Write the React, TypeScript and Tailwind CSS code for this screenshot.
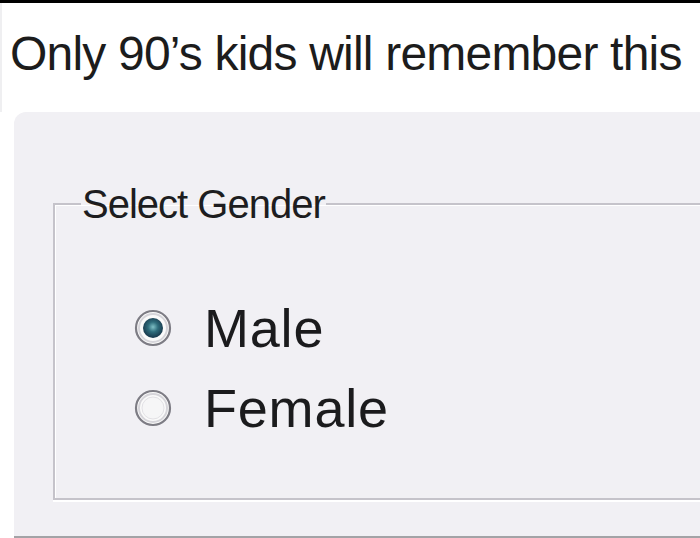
import React from "react";

function Radio({ checked }: { checked: boolean }) {
  return (
    <svg width="38" height="38" viewBox="0 0 38 38" className="shrink-0">
      <defs>
        <radialGradient id="dot" cx="50%" cy="45%" r="55%">
          <stop offset="0%" stopColor="#7fc0c6" />
          <stop offset="45%" stopColor="#2f6d7c" />
          <stop offset="100%" stopColor="#17364a" />
        </radialGradient>
      </defs>
      <circle cx="19" cy="19" r="17" fill="#fafafa" stroke="#7d7c84" strokeWidth="2.2" />
      <circle cx="19" cy="19" r="14" fill="none" stroke="#d6d5da" strokeWidth="2" />
      {checked ? (
        <circle cx="19" cy="19" r="10" fill="url(#dot)" />
      ) : (
        <circle cx="19" cy="19" r="11" fill="#f6f6f7" stroke="#e2e1e5" strokeWidth="1" />
      )}
    </svg>
  );
}

export default function App() {
  const font = { fontFamily: '"Liberation Sans", Arial, sans-serif' };

  return (
    <main
      className="w-[700px] h-[538px] bg-white flex flex-col overflow-hidden text-[#1b1b1d]"
      style={font}
    >
      <div className="h-[3px] bg-black shrink-0" />
      <header className="h-[109px] shrink-0 pl-[8px] pt-[27px] border-l-[2px] border-[#efeff1]">
        <h1 className="text-[48px] leading-none tracking-[-0.8px] text-[#1c1c1c]">
          Only 90’s kids will remember this
        </h1>
      </header>
      <div className="flex-1 flex flex-col ml-[14px] rounded-tl-[12px] bg-[#f1f0f4] border-b-[2px] border-[#a3a3a6]">
        <div className="flex-1 pl-[39px] pt-[72px] pb-[36px]">
          <fieldset className="h-full border-[#c5c3ca] border-l-[2px] border-t-[2px] border-b-[2px] border-r-0 shadow-[inset_1px_1px_0_#ffffff,0_2px_0_#ffffff]">
            <legend className="ml-[26px] px-[1px] text-[40px] leading-[40px] tracking-[-1px] text-[#1d1d20]">
              Select Gender
            </legend>
            <div className="flex flex-col gap-[10px] pl-[79px] pt-[69px]">
              <label className="flex items-center gap-[32px]">
                <Radio checked />
                <span className="text-[54px] leading-[70px] tracking-[0.8px]">Male</span>
              </label>
              <label className="flex items-center gap-[32px]">
                <Radio checked={false} />
                <span className="text-[54px] leading-[70px] tracking-[0.8px]">Female</span>
              </label>
            </div>
          </fieldset>
        </div>
      </div>
    </main>
  );
}
